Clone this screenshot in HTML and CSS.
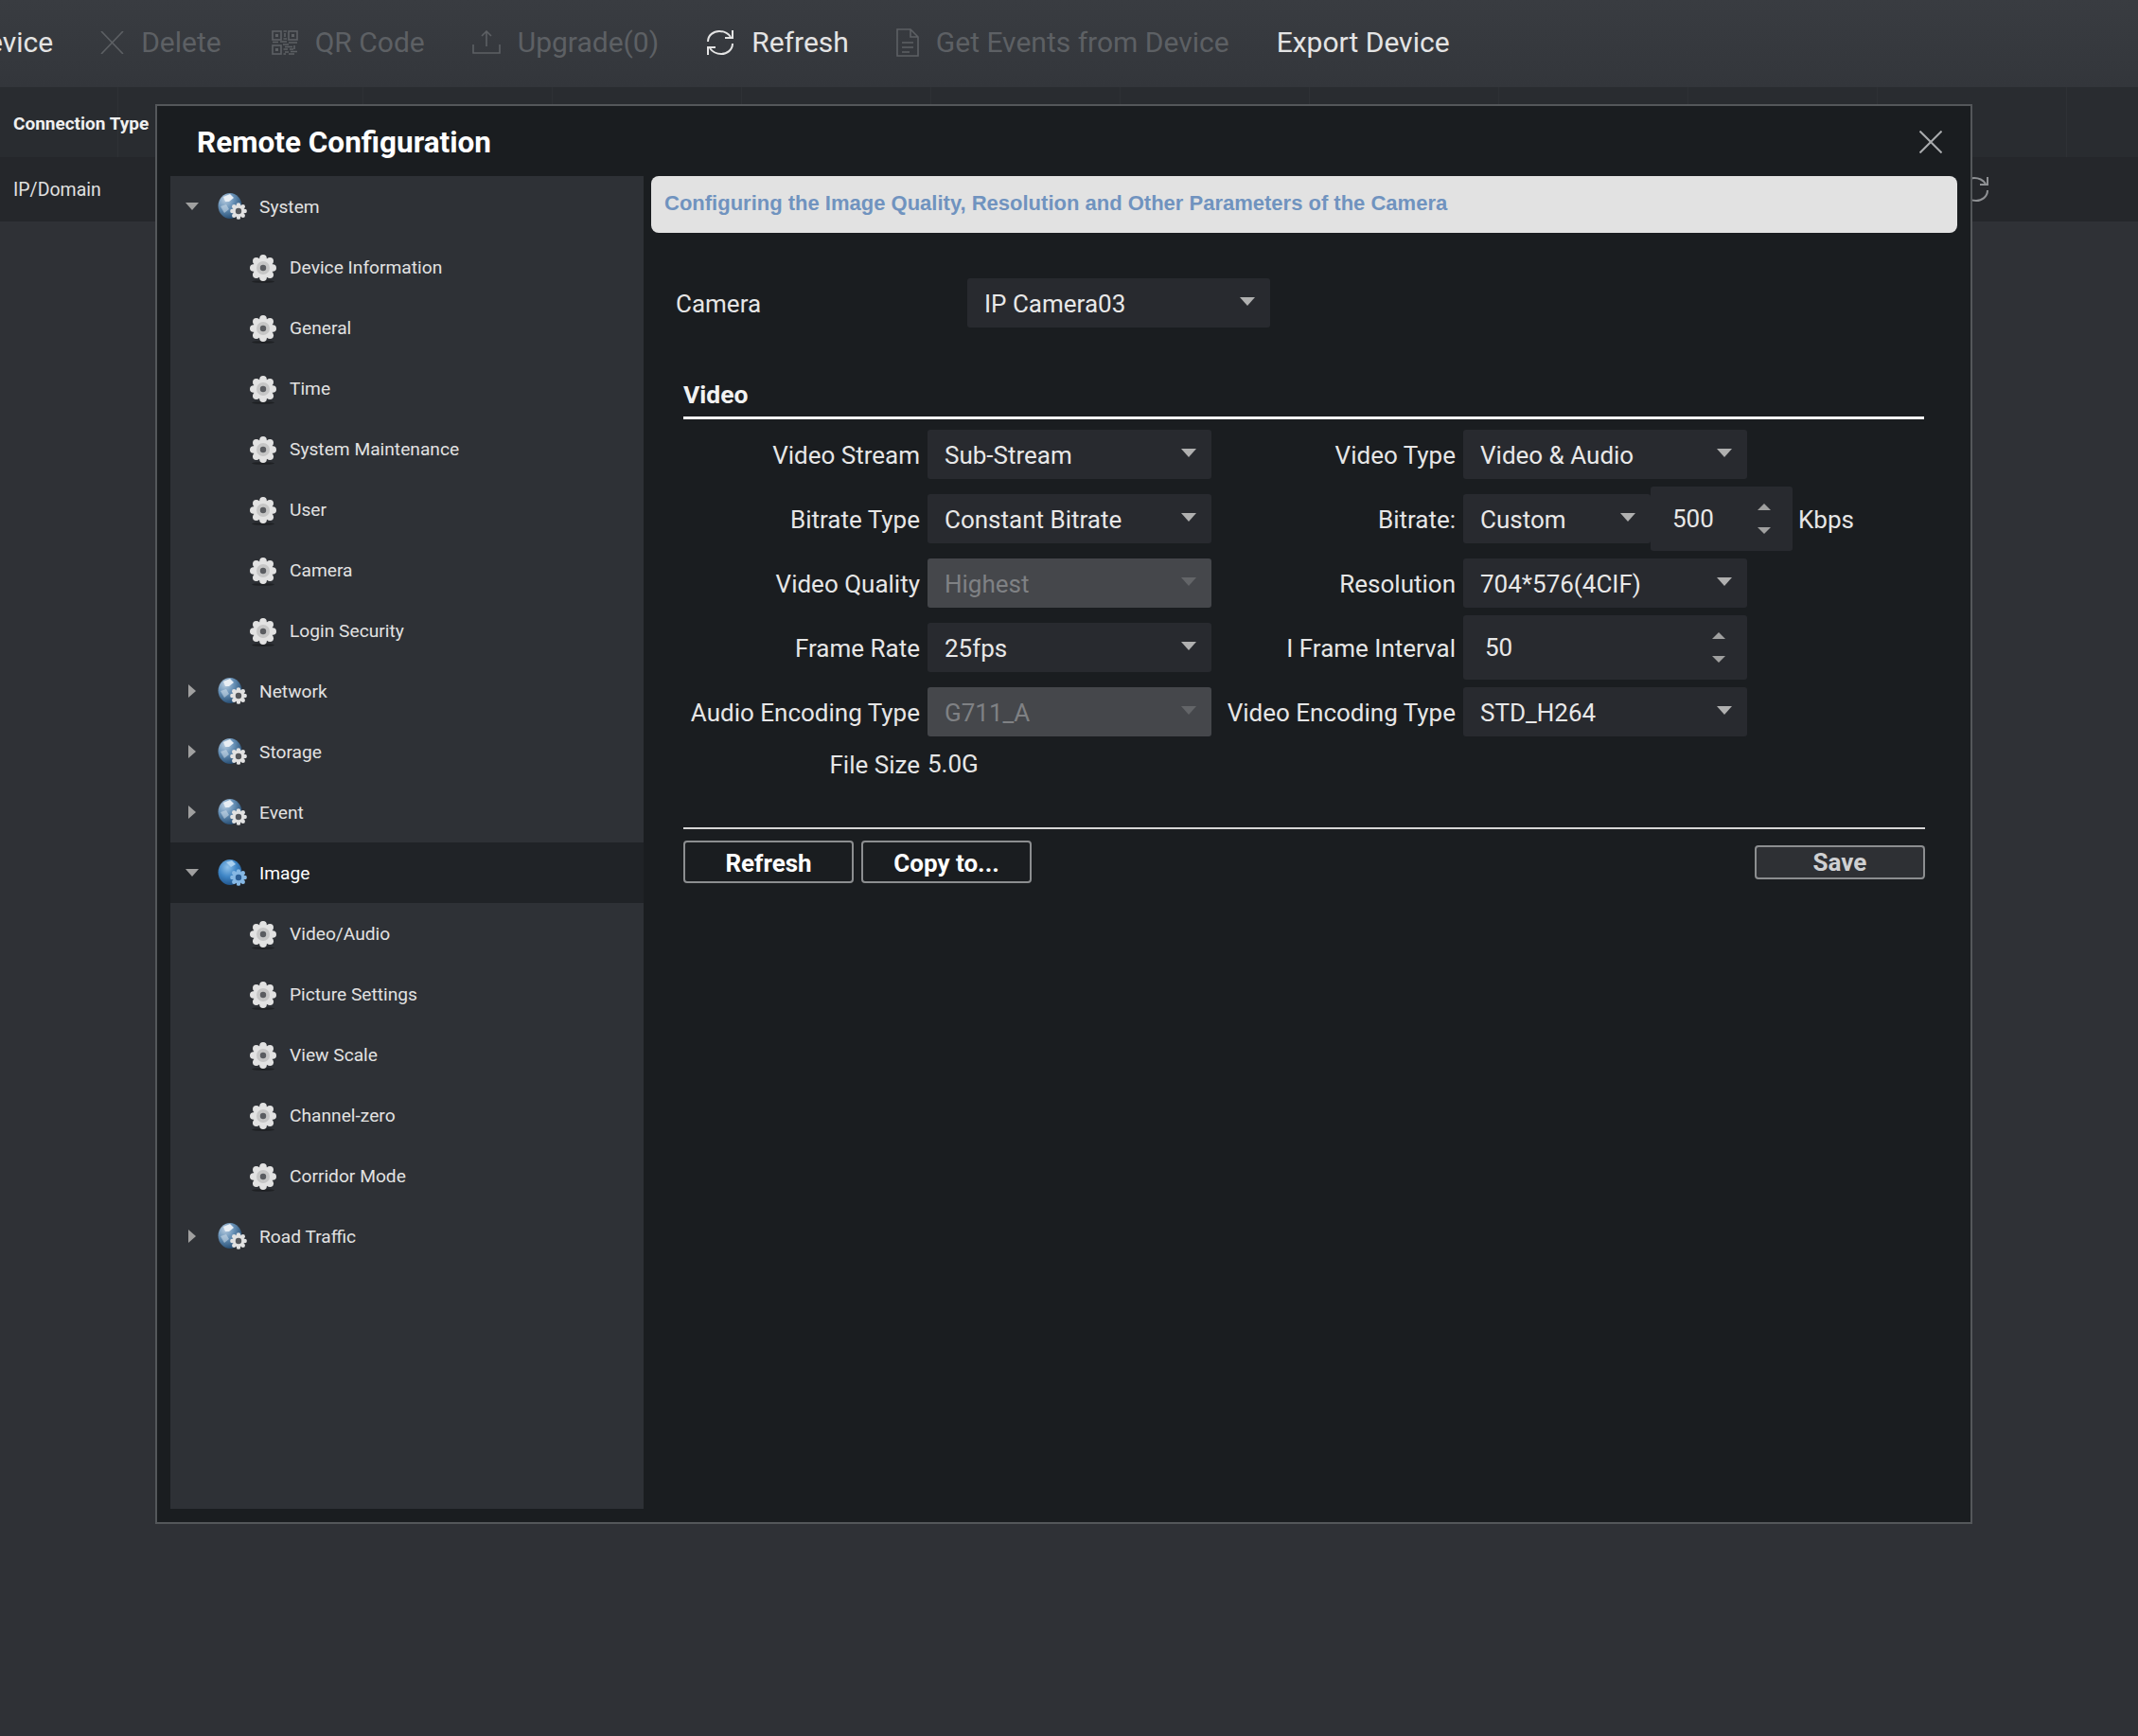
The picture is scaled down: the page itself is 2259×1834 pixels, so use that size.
FILE: index.html
```html
<!DOCTYPE html>
<html lang="en">
<head>
    <meta charset="UTF-8">
    <meta name="viewport" content="width=device-width, initial-scale=1.0">
    <title>Remote Configuration</title>
    <link rel="stylesheet" href="styles.css">
</head>
<body>
    <svg class="defs" width="0" height="0">
        <defs>
            <filter id="soft" x="-10%" y="-10%" width="120%" height="120%">
                <feGaussianBlur stdDeviation="0.45"/>
            </filter>
            <radialGradient id="globe-grey" cx="30%" cy="25%" r="80%">
                <stop offset="0" stop-color="#b9cde0"/>
                <stop offset="0.45" stop-color="#6a93b8"/>
                <stop offset="1" stop-color="#234a70"/>
            </radialGradient>
            <radialGradient id="globe-blue" cx="40%" cy="30%" r="75%">
                <stop offset="0" stop-color="#8fc1ea"/>
                <stop offset="0.5" stop-color="#3f86c6"/>
                <stop offset="1" stop-color="#1c4f86"/>
            </radialGradient>
            <symbol id="gear" viewBox="0 0 28 30">
                <ellipse cx="14" cy="28.5" rx="12" ry="1.3" fill="#1f2124"/>
                <g filter="url(#soft)">
                    <g fill="#e2e2e2">
                        <circle cx="14" cy="14" r="10.5"/>
                        <circle cx="14" cy="3.8" r="3.8"/>
                        <circle cx="14" cy="24.2" r="3.8"/>
                        <circle cx="3.8" cy="14" r="3.8"/>
                        <circle cx="24.2" cy="14" r="3.8"/>
                        <circle cx="6.8" cy="6.8" r="3.8"/>
                        <circle cx="21.2" cy="6.8" r="3.8"/>
                        <circle cx="6.8" cy="21.2" r="3.8"/>
                        <circle cx="21.2" cy="21.2" r="3.8"/>
                    </g>
                    <circle cx="14" cy="14" r="7" fill="#c6c6c6"/>
                    <circle cx="14" cy="14" r="3.2" fill="#5a5c60"/>
                </g>
            </symbol>
            <symbol id="gear-small" viewBox="0 0 28 28">
                <g fill="#e2e2e2">
                    <circle cx="14" cy="14" r="10"/>
                    <circle cx="14" cy="3.6" r="3.4"/>
                    <circle cx="14" cy="24.4" r="3.4"/>
                    <circle cx="3.6" cy="14" r="3.4"/>
                    <circle cx="24.4" cy="14" r="3.4"/>
                    <circle cx="6.6" cy="6.6" r="3.4"/>
                    <circle cx="21.4" cy="6.6" r="3.4"/>
                    <circle cx="6.6" cy="21.4" r="3.4"/>
                    <circle cx="21.4" cy="21.4" r="3.4"/>
                </g>
                <circle cx="14" cy="14" r="5" fill="#55575b"/>
            </symbol>
            <symbol id="gear-small-on" viewBox="0 0 28 28">
                <g fill="#86b8e4">
                    <circle cx="14" cy="14" r="10"/>
                    <circle cx="14" cy="3.6" r="3.4"/>
                    <circle cx="14" cy="24.4" r="3.4"/>
                    <circle cx="3.6" cy="14" r="3.4"/>
                    <circle cx="24.4" cy="14" r="3.4"/>
                    <circle cx="6.6" cy="6.6" r="3.4"/>
                    <circle cx="21.4" cy="6.6" r="3.4"/>
                    <circle cx="6.6" cy="21.4" r="3.4"/>
                    <circle cx="21.4" cy="21.4" r="3.4"/>
                </g>
                <circle cx="14" cy="14" r="5" fill="#2c5f96"/>
            </symbol>
            <symbol id="globe" viewBox="0 0 31 28">
                <ellipse cx="13" cy="13.5" rx="12.5" ry="13.5" fill="url(#globe-grey)"/>
                <path d="M6 4 L13 1 L17 5 L12 9 L8 9Z" fill="#e8eef4" filter="url(#soft)"/>
                <path d="M3 14 L9 12 L12 17 L7 21Z" fill="#dbe6ef" opacity="0.5" filter="url(#soft)"/>
                <use href="#gear-small" x="13" y="10" width="18" height="18"/>
            </symbol>
            <symbol id="globe-on" viewBox="0 0 31 28">
                <ellipse cx="13" cy="13.5" rx="12.5" ry="13.5" fill="url(#globe-blue)"/>
                <path d="M9 3 L15 1 L19 5 L14 8Z" fill="#a9d0ef" filter="url(#soft)"/>
                <use href="#gear-small-on" x="13" y="10" width="18" height="18"/>
            </symbol>
            <symbol id="refresh" viewBox="0 0 30 28">
                <path d="M2 13 C2 6 8 2 14 2 C19 2 23 4 26 8 M28 15 C28 22 22 26 16 26 C11 26 7 24 4 20" fill="none" stroke="currentColor" stroke-width="2"/>
                <path d="M28 1 V9 H20 M2 27 V19 H10" fill="none" stroke="currentColor" stroke-width="2"/>
            </symbol>
        </defs>
    </svg>

    <div class="toolbar">
        <span class="tool on first">evice</span>
        <span class="tool delete">
            <svg class="tool-icon" width="25" height="24" viewBox="0 0 25 24"><path d="M1 0 L24 24 M24 0 L1 24" fill="none" stroke="currentColor" stroke-width="1.6"/></svg>
            Delete
        </span>
        <span class="tool">
            <svg class="tool-icon" width="28" height="26" viewBox="0 0 28 26" fill="none" stroke="currentColor" stroke-width="1.6">
                <rect x="1" y="1" width="9" height="9"/><rect x="18" y="1" width="9" height="9"/><rect x="1" y="16" width="9" height="9"/>
                <rect x="4" y="4" width="3" height="3" fill="currentColor" stroke="none"/><rect x="21" y="4" width="3" height="3" fill="currentColor" stroke="none"/><rect x="4" y="19" width="3" height="3" fill="currentColor" stroke="none"/>
                <path d="M12.5 1 H16 M14 3 V7 M12.5 9 H16 M1 12.5 H7 M9 12 H16 M18 13 H27 M12 15 H18 M14 17.5 H22 M24 16 V20 M12.5 20 H17 M19 20 H23 M14 23 H18 M20 22.5 H27 M12.5 25 H15 M18 25 H24"/>
            </svg>
            QR Code
        </span>
        <span class="tool">
            <svg class="tool-icon" width="30" height="25" viewBox="0 0 30 25" fill="none" stroke="currentColor" stroke-width="1.6"><path d="M15 1 V17 M10 6 L15 1 L20 6 M1 15 V24 H29 V15"/></svg>
            Upgrade(0)
        </span>
        <span class="tool on">
            <svg class="tool-icon" width="30" height="28"><use href="#refresh"/></svg>
            Refresh
        </span>
        <span class="tool">
            <svg class="tool-icon" width="24" height="30" viewBox="0 0 24 30" fill="none" stroke="currentColor" stroke-width="1.6"><path d="M1 1 H15 L23 9 V29 H1Z M15 1 V9 H23 M6 15 H18 M6 20 H18 M6 25 H14"/></svg>
            Get Events from Device
        </span>
        <span class="tool on">Export Device</span>
    </div>

    <div class="table-head">Connection Type</div>
    <div class="table-row">
        <span>IP/Domain</span>
        <svg class="row-refresh" width="30" height="28"><use href="#refresh"/></svg>
    </div>

    <div class="dialog">
        <div class="dialog-title">
            <span>Remote Configuration</span>
            <svg class="close" width="24" height="24" viewBox="0 0 24 24"><path d="M0.5 0.5 L23.5 23.5 M23.5 0.5 L0.5 23.5" fill="none" stroke="currentColor" stroke-width="2"/></svg>
        </div>
        <div class="dialog-body">
            <div class="tree">
                <div class="node"><span class="arrow-down"></span><svg class="globe" width="31" height="28"><use href="#globe"/></svg>System</div>
                <div class="leaf"><svg class="gear" width="28" height="30"><use href="#gear"/></svg>Device Information</div>
                <div class="leaf"><svg class="gear" width="28" height="30"><use href="#gear"/></svg>General</div>
                <div class="leaf"><svg class="gear" width="28" height="30"><use href="#gear"/></svg>Time</div>
                <div class="leaf"><svg class="gear" width="28" height="30"><use href="#gear"/></svg>System Maintenance</div>
                <div class="leaf"><svg class="gear" width="28" height="30"><use href="#gear"/></svg>User</div>
                <div class="leaf"><svg class="gear" width="28" height="30"><use href="#gear"/></svg>Camera</div>
                <div class="leaf"><svg class="gear" width="28" height="30"><use href="#gear"/></svg>Login Security</div>
                <div class="node"><span class="arrow-right"></span><svg class="globe" width="31" height="28"><use href="#globe"/></svg>Network</div>
                <div class="node"><span class="arrow-right"></span><svg class="globe" width="31" height="28"><use href="#globe"/></svg>Storage</div>
                <div class="node"><span class="arrow-right"></span><svg class="globe" width="31" height="28"><use href="#globe"/></svg>Event</div>
                <div class="node active"><span class="arrow-down"></span><svg class="globe" width="31" height="28"><use href="#globe-on"/></svg>Image</div>
                <div class="leaf"><svg class="gear" width="28" height="30"><use href="#gear"/></svg>Video/Audio</div>
                <div class="leaf"><svg class="gear" width="28" height="30"><use href="#gear"/></svg>Picture Settings</div>
                <div class="leaf"><svg class="gear" width="28" height="30"><use href="#gear"/></svg>View Scale</div>
                <div class="leaf"><svg class="gear" width="28" height="30"><use href="#gear"/></svg>Channel-zero</div>
                <div class="leaf"><svg class="gear" width="28" height="30"><use href="#gear"/></svg>Corridor Mode</div>
                <div class="node"><span class="arrow-right"></span><svg class="globe" width="31" height="28"><use href="#globe"/></svg>Road Traffic</div>
            </div>

            <div class="content">
                <div class="banner">Configuring the Image Quality, Resolution and Other Parameters of the Camera</div>

                <div class="camera-row">
                    <label class="camera-label">Camera</label>
                    <div class="select camera-select">IP Camera03<span class="caret"></span></div>
                </div>

                <div class="section">
                    <div class="section-title">Video</div>
                    <div class="form-grid">
                        <label>Video Stream</label>
                        <div class="select">Sub-Stream<span class="caret"></span></div>
                        <label>Video Type</label>
                        <div class="select">Video &amp; Audio<span class="caret"></span></div>

                        <label>Bitrate Type</label>
                        <div class="select">Constant Bitrate<span class="caret"></span></div>
                        <label>Bitrate:</label>
                        <div class="bitrate">
                            <div class="select custom">Custom<span class="caret"></span></div>
                            <div class="spin small"><span>500</span><span class="spin-arrows"><i class="up"></i><i class="down"></i></span></div>
                            <span class="unit">Kbps</span>
                        </div>

                        <label>Video Quality</label>
                        <div class="select disabled">Highest<span class="caret"></span></div>
                        <label>Resolution</label>
                        <div class="select">704*576(4CIF)<span class="caret"></span></div>

                        <label>Frame Rate</label>
                        <div class="select">25fps<span class="caret"></span></div>
                        <label>I Frame Interval</label>
                        <div class="spin"><span>50</span><span class="spin-arrows"><i class="up"></i><i class="down"></i></span></div>

                        <label>Audio Encoding Type</label>
                        <div class="select disabled">G711_A<span class="caret"></span></div>
                        <label>Video Encoding Type</label>
                        <div class="select">STD_H264<span class="caret"></span></div>

                        <label>File Size</label>
                        <div class="file-size">5.0G</div>
                    </div>

                    <div class="footer">
                        <div class="footer-left">
                            <button class="btn">Refresh</button>
                            <button class="btn">Copy to...</button>
                        </div>
                        <button class="btn save">Save</button>
                    </div>
                </div>
            </div>
        </div>
    </div>
</body>
</html>
```
FILE: styles.css
```css
body {
    position: relative;
    margin: 0;
    width: 2259px;
    height: 1834px;
    overflow: hidden;
    background: #2f3136;
    color: #e6e6e6;
    font-family: Roboto, "Noto Sans", sans-serif;
}

.defs {
    position: absolute;
}

/* toolbar */
.toolbar {
    display: flex;
    align-items: center;
    height: 92px;
    padding-bottom: 3px;
    box-sizing: border-box;
    background: linear-gradient(#393c41, #33363b);
    font-size: 30px;
    color: #5d6064;
    white-space: nowrap;
}

.tool {
    display: flex;
    align-items: center;
    gap: 18px;
    margin-right: 50px;
}

.tool.on {
    color: #e4e4e4;
}

.tool.first {
    margin-left: -13px;
}

.tool.delete {
    margin-right: 53px;
}

.tool-icon {
    flex: none;
}

/* table behind the dialog */
.table-head {
    display: flex;
    align-items: center;
    height: 74px;
    padding: 2px 0 0 14px;
    box-sizing: border-box;
    background: #292c30 repeating-linear-gradient(90deg, transparent 0 199px, #2e3135 199px 200px) 184px 0;
    font-size: 19px;
    font-weight: bold;
    color: #f0f0f0;
}

.table-row {
    display: flex;
    align-items: center;
    justify-content: space-between;
    height: 68px;
    padding: 0 157px 0 14px;
    background: #25272b;
    font-size: 19.5px;
    color: #e0e0e0;
}

.row-refresh {
    color: #8f9194;
}

/* dialog */
.dialog {
    position: absolute;
    left: 164px;
    top: 110px;
    width: 1920px;
    height: 1500px;
    box-sizing: border-box;
    border: 2px solid #54575a;
    background: #1a1d20;
    display: flex;
    flex-direction: column;
}

.dialog-title {
    display: flex;
    align-items: center;
    justify-content: space-between;
    flex: none;
    height: 74px;
    padding: 2px 30px 0 42px;
    box-sizing: border-box;
    font-size: 31.5px;
    font-weight: bold;
    color: #fff;
}

.close {
    color: #a9abad;
}

.dialog-body {
    display: flex;
    flex: 1;
    padding: 0 14px 14px;
    gap: 8px;
}

/* tree */
.tree {
    flex: none;
    width: 500px;
    background: #2e3136;
    font-size: 19.2px;
    color: #e2e2e2;
}

.node,
.leaf {
    display: flex;
    align-items: center;
    height: 64px;
}

.node {
    position: relative;
    padding-left: 50px;
}

.node.active {
    background: #202327;
    color: #fff;
}

.leaf {
    padding-left: 84px;
}

.globe {
    margin-right: 13px;
}

.gear {
    margin-right: 14px;
    margin-top: 3px;
}

.arrow-down,
.arrow-right {
    position: absolute;
    width: 0;
    height: 0;
}

.arrow-down {
    left: 16px;
    top: 28px;
    border-left: 7px solid transparent;
    border-right: 7px solid transparent;
    border-top: 8px solid #a0a0a0;
}

.arrow-right {
    left: 19px;
    top: 25px;
    border-top: 7px solid transparent;
    border-bottom: 7px solid transparent;
    border-left: 8px solid #a0a0a0;
}

/* main panel */
.content {
    flex: 1;
}

.banner {
    display: flex;
    align-items: center;
    height: 60px;
    padding: 0 0 2px 14px;
    box-sizing: border-box;
    border-radius: 8px;
    background: #e2e2e2;
    color: #7093bf;
    font-family: "Liberation Sans", Arial, sans-serif;
    font-size: 22px;
    font-weight: bold;
}

.camera-row {
    display: flex;
    align-items: center;
    margin: 48px 0 0 26px;
    font-size: 26px;
}

.camera-label {
    width: 308px;
    padding-top: 2px;
}

.section {
    margin: 54px 0 0 34px;
    width: 1311px;
    font-size: 26px;
}

.section-title {
    height: 39px;
    padding-top: 1px;
    border-bottom: 3px solid #fff;
    font-weight: bold;
    font-size: 26.5px;
    color: #f2f2f2;
}

.form-grid {
    display: grid;
    grid-template-columns: 250px 300px 250px 1fr;
    grid-template-rows: repeat(5, 52px) 26px;
    gap: 16px 8px;
    align-items: center;
    margin-top: 11px;
}

.form-grid label {
    padding-top: 2px;
    text-align: right;
    white-space: nowrap;
}

.select {
    position: relative;
    display: flex;
    align-items: center;
    width: 300px;
    height: 52px;
    padding: 2px 0 0 18px;
    box-sizing: border-box;
    border-radius: 3px;
    background: #282a2f;
    color: #e8e8e8;
}

.camera-select {
    width: 320px;
}

.select.custom {
    width: 198px;
}

.select.disabled {
    background: #45474b;
    color: #7f8184;
}

.caret {
    position: absolute;
    right: 16px;
    top: 20px;
    width: 0;
    height: 0;
    border-left: 8px solid transparent;
    border-right: 8px solid transparent;
    border-top: 9px solid #b0b0b0;
}

.disabled .caret {
    border-top-color: #636568;
}

.bitrate {
    display: flex;
    align-items: center;
}

.spin {
    display: flex;
    align-items: center;
    justify-content: space-between;
    width: 300px;
    height: 68px;
    margin: -8px 0;
    padding: 0 23px;
    box-sizing: border-box;
    border-radius: 3px;
    background: #282a2f;
    color: #e8e8e8;
}

.spin.small {
    width: 150px;
}

.spin-arrows {
    display: flex;
    flex-direction: column;
    gap: 18px;
}

.spin-arrows i {
    width: 0;
    height: 0;
    border-left: 7px solid transparent;
    border-right: 7px solid transparent;
}

.spin-arrows .up {
    border-bottom: 7px solid #a0a0a0;
}

.spin-arrows .down {
    border-top: 7px solid #a0a0a0;
}

.unit {
    margin-left: 6px;
    padding-top: 2px;
}

.footer {
    display: flex;
    align-items: center;
    justify-content: space-between;
    margin-top: 54px;
    margin-right: -1px;
    padding-top: 12px;
    border-top: 2px solid #d6d6d6;
}

.footer-left {
    display: flex;
    gap: 8px;
}

.btn {
    width: 180px;
    height: 45px;
    padding: 2px 0 0;
    box-sizing: border-box;
    border: 2px solid #8c8e90;
    border-radius: 4px;
    background: #1a1d20;
    color: #fff;
    font-family: inherit;
    font-size: 26px;
    font-weight: bold;
    cursor: pointer;
}

.btn.save {
    height: 36px;
    padding: 0;
    background: #2e3034;
    color: #cfd0d2;
}
```
